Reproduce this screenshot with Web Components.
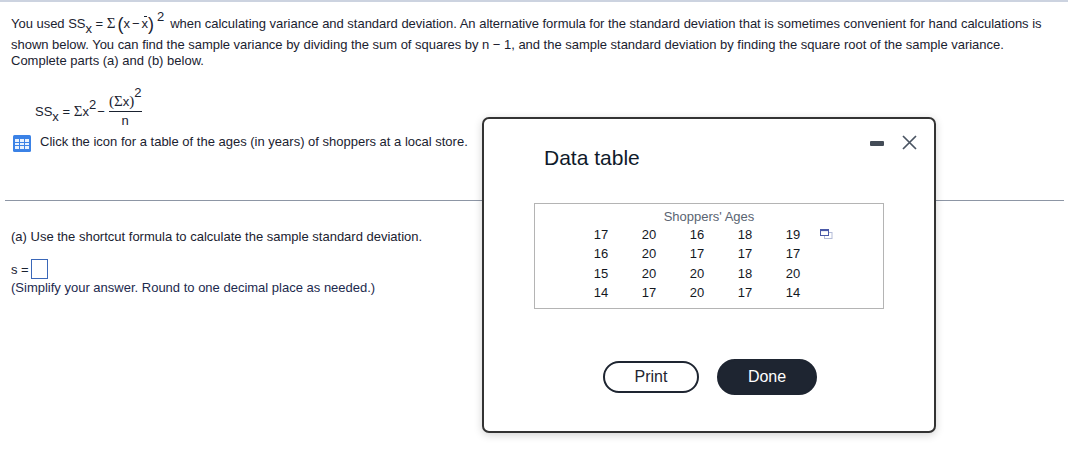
<!DOCTYPE html>
<html>
<head>
<meta charset="utf-8">
<title>Data table</title>
<style>
  html, body { margin: 0; padding: 0; background: #fff; }
  body { font-family: "Liberation Sans", Arial, sans-serif; color: #1f2937; overflow: hidden; }
</style>
</head>
<body>
<question-page>
  <question-intro></question-intro>
  <part-a></part-a>
  <data-modal heading="Data table">
    <age-table></age-table>
    <pill-button slot="actions">Print</pill-button>
    <pill-button slot="actions" solid>Done</pill-button>
  </data-modal>
</question-page>

<script>
// Page frame, the modal sits over it
class QuestionPage extends HTMLElement {
  constructor() {
    super();
    this.attachShadow({ mode: "open" });
    this.shadowRoot.innerHTML = `
    <style>
      :host {
        display: block;
        position: relative;
        width: 1068px;
        height: 465px;
        box-sizing: border-box;
        border-top: 2px solid #ccd3e0;
        background: #fff;
      }
    </style>
    <slot></slot>
    `;
  }
}

class QuestionIntro extends HTMLElement {
  constructor() {
    super();
    this.attachShadow({ mode: "open" });
    this.shadowRoot.innerHTML = `
    <style>
      :host {
        display: block;
        height: 198px;
        box-sizing: border-box;
        padding: 11px 0 0 11px;
        font-size: 13px;
        color: #1a2230;
      }
      .l1 { display: flex; align-items: center; height: 21px; white-space: pre; letter-spacing: -0.02px; }
      .l2 { margin-top: 3px; height: 16px; line-height: 16px; white-space: pre; letter-spacing: -0.02px; }
      .l3 { height: 16px; line-height: 16px; white-space: pre; }
      .sub { font-size: 13px; position: relative; top: 5px; }
      .serif { font-family: "Liberation Serif", serif; font-size: 15px; }
      .big { font-size: 18px; line-height: 18px; font-weight: 300; }
      .sup { font-size: 13px; position: relative; top: -7px; }
      .l1 .sup { margin: 0 6px 0 3px; }
      .l1 .sum { margin-right: 2px; }
      .l1 .minus { margin: 0 2px; }
      .bar { position: relative; }
      .bar::before {
        content: "";
        position: absolute;
        left: 2px;
        top: 0;
        width: 3px;
        height: 1px;
        background: #1a2230;
      }
      .formula {
        display: flex;
        align-items: center;
        margin: 21px 0 0 24px;
        height: 42px;
        white-space: pre;
      }
      .formula .minus { margin-left: 1px; }
      .frac {
        display: flex;
        flex-direction: column;
        align-items: center;
        margin-left: 4px;
        width: 33px;
      }
      .num { height: 21px; line-height: 22px; border-bottom: 1px solid #1a2230; width: 100%; text-align: center; }
      .num .sup { top: -9px; }
      .den { height: 20px; line-height: 18px; text-align: center; }
      .click { display: flex; align-items: center; gap: 9px; margin: 0 0 0 2px; height: 18px; }
      svg { display: block; margin-top: 4px; }
    </style>
    <div class="l1">You used SS<span class="sub">x</span> = <span class="serif sum">Σ</span><span class="big">(</span>x<span class="minus">−</span><span class="bar">x</span><span class="big">)</span><span class="sup">2</span>when calculating variance and standard deviation. An alternative formula for the standard deviation that is sometimes convenient for hand calculations is</div>
    <div class="l2">shown below. You can find the sample variance by dividing the sum of squares by n − 1, and the sample standard deviation by finding the square root of the sample variance.</div>
    <div class="l3">Complete parts (a) and (b) below.</div>
    <div class="formula">SS<span class="sub">x</span> = <span class="serif">Σ</span>x<span class="sup">2</span><span class="minus">−</span><span class="frac"><span class="num"><span class="serif">(Σ</span>x<span class="serif">)</span><span class="sup">2</span></span><span class="den">n</span></span></div>
    <div class="click">
      <svg width="18" height="17" viewBox="0 0 18 17">
        <rect width="18" height="17" rx="1.5" fill="#3b82e6"/>
        <g fill="#e8f1fd">
          <rect x="2" y="4" width="4" height="3"/><rect x="7" y="4" width="4" height="3"/><rect x="12" y="4" width="4" height="3"/>
          <rect x="2" y="8" width="4" height="2"/><rect x="7" y="8" width="4" height="2"/><rect x="12" y="8" width="4" height="2"/>
          <rect x="2" y="11" width="4" height="3"/><rect x="7" y="11" width="4" height="3"/><rect x="12" y="11" width="4" height="3"/>
        </g>
      </svg>
      <span>Click the icon for a table of the ages (in years) of shoppers at a local store.</span>
    </div>
    `;
  }
}

class PartA extends HTMLElement {
  constructor() {
    super();
    this.attachShadow({ mode: "open" });
    this.shadowRoot.innerHTML = `
    <style>
      :host {
        display: block;
        margin: 0 4px 0 5px;
        border-top: 1px solid #8d96a5;
        padding: 28px 0 0 6px;
        font-size: 13px;
        color: #1a2230;
      }
      .q { height: 16px; line-height: 16px; }
      .ans { display: flex; align-items: center; margin-top: 14px; height: 20px; }
      .box { width: 15px; height: 18px; border: 1px solid #3a67b8; margin-left: 2px; box-sizing: content-box; }
      .hint { height: 16px; line-height: 16px; margin-top: 1px; color: #1c2a4e; }
    </style>
    <div class="q">(a) Use the shortcut formula to calculate the sample standard deviation.</div>
    <div class="ans"><span>s =</span><span class="box"></span></div>
    <div class="hint">(Simplify your answer. Round to one decimal place as needed.)</div>
    `;
  }
}

class DataModal extends HTMLElement {
  constructor() {
    super();
    this.attachShadow({ mode: "open" });
    this.shadowRoot.innerHTML = `
    <style>
      :host {
        display: flex;
        flex-direction: column;
        position: absolute;
        left: 482px;
        top: 115px;
        width: 454px;
        height: 316px;
        box-sizing: border-box;
        border: 2px solid #333;
        border-radius: 7px;
        background: #fff;
        box-shadow: 0 2px 8px rgba(0,0,0,.18);
      }
      header { display: flex; justify-content: space-between; height: 84px; }
      h2 { margin: 27px 0 0 60px; font-size: 21px; font-weight: 400; line-height: 24px; color: #0f1a2a; }
      .tools { display: flex; align-items: center; gap: 18px; height: 18px; margin: 14px 17px 0 0; }
      .min { width: 14px; height: 5px; border-radius: 1px; background: #444c57; margin-top: 3px; }
      .body { padding: 0 50px; }
      .actions { display: flex; align-items: center; gap: 18px; margin: 50px 0 0 119px; }
    </style>
    <header>
      <h2></h2>
      <div class="tools">
        <span class="min"></span>
        <svg width="15" height="15" viewBox="0 0 15 15"><path d="M1 1l13 13M14 1L1 14" stroke="#4a5462" stroke-width="1.7" fill="none"/></svg>
      </div>
    </header>
    <div class="body"><slot></slot></div>
    <div class="actions"><slot name="actions"></slot></div>
    `;
    this.shadowRoot.querySelector("h2").textContent = this.getAttribute("heading");
  }
}

class AgeTable extends HTMLElement {
  constructor() {
    super();
    this.attachShadow({ mode: "open" });
    const rows = [
      [17, 20, 16, 18, 19],
      [16, 20, 17, 17, 17],
      [15, 20, 20, 18, 20],
      [14, 17, 20, 17, 14]
    ];
    const cells = rows.flat().map(n => `<span>${n}</span>`).join("");
    this.shadowRoot.innerHTML = `
    <style>
      :host {
        display: block;
        position: relative;
        width: 350px;
        height: 106px;
        box-sizing: border-box;
        border: 1px solid #b4b4b4;
        font-size: 13px;
      }
      .title { text-align: center; color: #5a6472; line-height: 16px; padding-top: 5px; }
      .grid {
        display: grid;
        grid-template-columns: repeat(5, 48px);
        grid-auto-rows: 19.4px;
        justify-content: start;
        margin: 1px 0 0 42px;
        line-height: 18px;
        color: #14181f;
        text-align: center;
      }
      svg { position: absolute; left: 285px; top: 25px; }
    </style>
    <div class="title">Shoppers' Ages</div>
    <div class="grid">${cells}</div>
    <svg width="13" height="11" viewBox="0 0 13 11">
      <rect x="4.5" y="3.5" width="7.5" height="6" fill="#fff" stroke="#b4bcd8"/>
      <rect x="0.5" y="0.5" width="8" height="6" fill="#fff" stroke="#4a5aa8"/>
      <rect x="0.5" y="0.5" width="8" height="1.6" fill="#4a5aa8"/>
    </svg>
    `;
  }
}

class PillButton extends HTMLElement {
  constructor() {
    super();
    this.attachShadow({ mode: "open" });
    this.shadowRoot.innerHTML = `
    <style>
      :host {
        display: inline-flex;
        align-items: center;
        justify-content: center;
        box-sizing: border-box;
        width: 96px;
        height: 32px;
        border: 2px solid #1e2531;
        border-radius: 16px;
        font-size: 16px;
        color: #1e2531;
        background: #fff;
      }
      :host([solid]) {
        width: 100px;
        height: 36px;
        border-radius: 18px;
        background: #1e2531;
        color: #fff;
      }
    </style>
    <slot></slot>
    `;
  }
}

customElements.define("question-page", QuestionPage);
customElements.define("question-intro", QuestionIntro);
customElements.define("part-a", PartA);
customElements.define("data-modal", DataModal);
customElements.define("age-table", AgeTable);
customElements.define("pill-button", PillButton);
</script>
</body>
</html>
